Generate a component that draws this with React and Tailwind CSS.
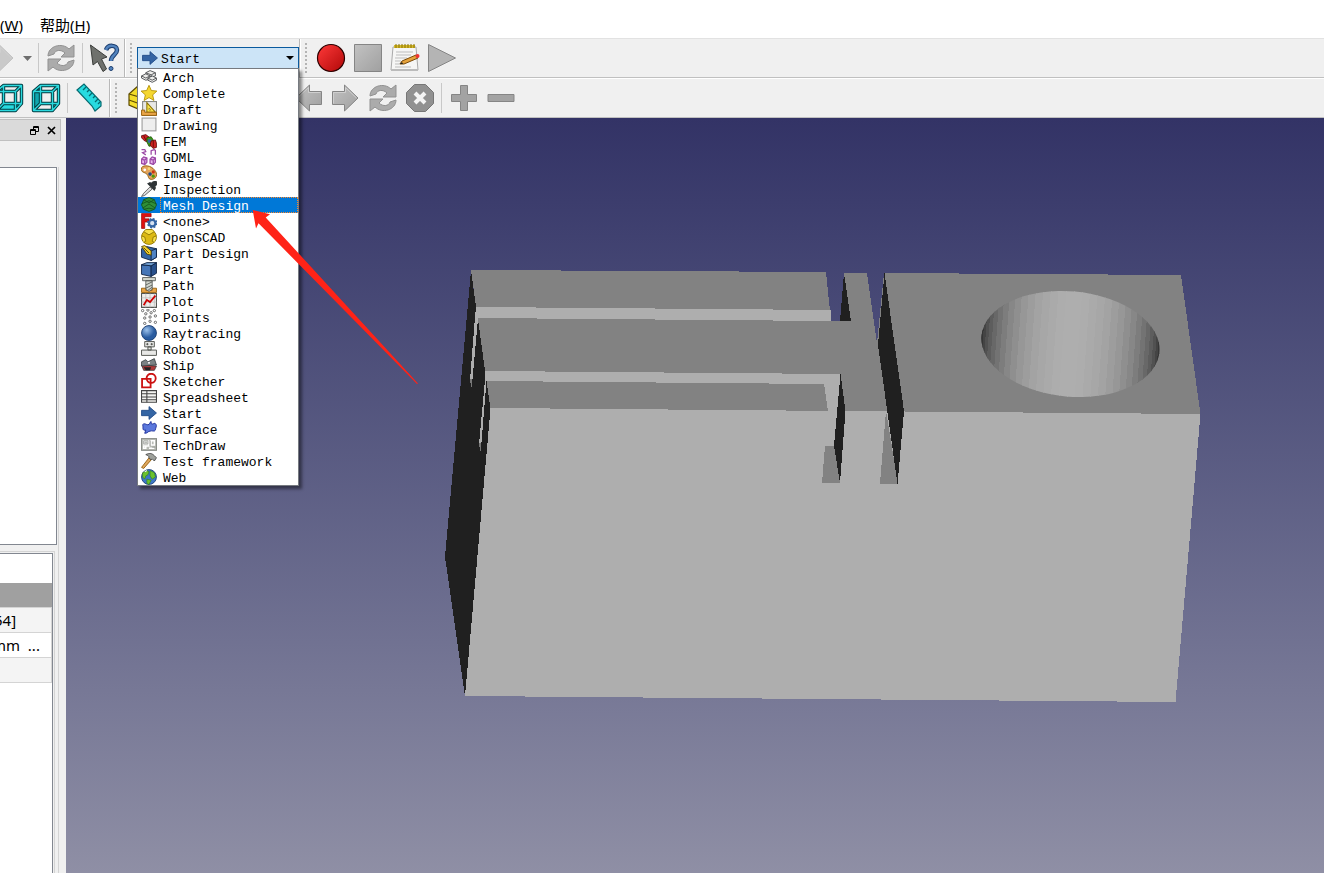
import React, { useState } from 'react';

const GREY = '#b4b4b4';
const GREY_LINE = '#858585';

/* ---------- workbench icons (16x16) ---------- */

const StartIcon = () => (
  <path d="M1 5.500h7V2l7 6-7 6v-3.500H1z" fill="#3465a4" stroke="#204a87" strokeWidth="0.8" />
);

const ICONS = {
  Arch: (
    <g fill="#eeeeec" stroke="#55575a" strokeWidth="0.9">
      <path d="M5 4l4-2 5 2v3l-4 1-5-2z" />
      <path d="M1 7l4-2 4 2v3l-4 1-4-2z" />
      <path d="M7 9l4-2 4 2v2l-4 2-4-2z" />
      <path d="M5 4l5 2 4-2M10 6v2M1 7l4 2 4-2M7 9l4 2 4-2" fill="none" />
    </g>
  ),
  Complete: (
    <path d="M8 .8l2.200 4.900 5.200.5-4 3.600 1.200 5.200L8 12.300 3.400 15l1.200-5.200-4-3.600 5.200-.5z" fill="#f5d730" stroke="#b08d00" strokeWidth="0.8" />
  ),
  Draft: (
    <g>
      <rect x="2" y="1" width="13" height="13" fill="#e8e8e6" stroke="#888a85" />
      <path d="M6 2v9h8z" fill="#fce94f" stroke="#8a7000" />
      <path d="M8 7v2h2z" fill="#fff" stroke="#8a7000" strokeWidth="0.6" />
      <path d="M1 9h3v2h11v3H1z" fill="#e9a548" stroke="#8f5902" strokeWidth="0.8" />
    </g>
  ),
  Drawing: <rect x="1.500" y="1.500" width="13" height="12" fill="#eeeeee" stroke="#999" />,
  FEM: (
    <g strokeWidth="0.7">
      <path d="M1 3l4-1 4 3-1 4-4-1-3-3z" fill="#cc2222" stroke="#560000" />
      <path d="M6 5l4-1 2 3v5l-4 1-2-4z" fill="#3c9a16" stroke="#174a04" />
      <circle cx="8.500" cy="8" r="1.800" fill="#3465a4" />
      <path d="M10 8l4-1 1 3v4l-3 1-3-3z" fill="#cc2222" stroke="#560000" />
      <path d="M3 3l2 4M12 8v6" stroke="#560000" />
    </g>
  ),
  GDML: (
    <g fill="#e9b6ee" stroke="#9c4aa6" strokeWidth="1.200">
      <path d="M1 1h3l1 2-3 1 3 2M10 6V2l3-1 1 1v4" fill="none" />
      <path d="M1 10l2-2 3 1v4l-2 2-3-1zM9 10l2-2 3 1v4l-2 2-3-1z" />
      <path d="M1 10l3 1 2-2M4 11v4M9 10l3 1 2-2M12 11v4" fill="none" />
    </g>
  ),
  Image: (
    <g>
      <path d="M1 3c2-3 9-2 12 2 4 4 2 9-3 9-3 0-2-3-4-5S0 8 1 3z" fill="#e3a45c" stroke="#8f5902" strokeWidth="0.8" />
      <circle cx="4" cy="5" r="1.300" fill="#fff" />
      <circle cx="8" cy="4" r="1.300" fill="#f7d774" />
      <circle cx="9" cy="9" r="1.700" fill="#204a87" />
      <circle cx="12" cy="7" r="1.500" fill="#cc3311" />
      <circle cx="12" cy="11" r="1.500" fill="#4e9a06" />
    </g>
  ),
  Inspection: (
    <g>
      <path d="M9 6L3 12l-2 3 3-1 7-6z" fill="#ddd" stroke="#555" strokeWidth="0.8" />
      <path d="M7 3l6 6 1-2-1-1c3-2 3-6 0-5-2 0-2 1-3 2L9 2z" fill="#2e3436" stroke="#2e3436" />
    </g>
  ),
  'Mesh Design': (
    <g>
      <path d="M3 3l5-2 5 2 2 5-2 4-5 2-5-2-2-4z" fill="#2f8f38" stroke="#14551c" strokeWidth="0.8" />
      <path d="M1 7l7-3 7 3M2 11l6-4 6 4M3 3l5 3 5-3M3 12l5-1 5 1" fill="none" stroke="#14551c" strokeWidth="0.8" />
    </g>
  ),
  '<none>': (
    <g>
      <path d="M1 1h9v3H4v2h4v3H4v6H1z" fill="#e01010" stroke="#8a0000" strokeWidth="0.6" />
      <circle cx="11" cy="10" r="3" fill="#d6e2f2" stroke="#3465a4" strokeWidth="2" />
      <circle cx="11" cy="10" r="4.200" fill="none" stroke="#3465a4" strokeWidth="1.500" strokeDasharray="1.800 1.500" />
    </g>
  ),
  OpenSCAD: (
    <g>
      <circle cx="8" cy="8" r="7" fill="#dcb914" stroke="#8c7200" strokeWidth="0.8" />
      <path d="M3 3l5 3 5-3-2-2H5zM1 7l3 1 1 4-2 1M15 7l-3 1-1 4 2 1" fill="#f7e04a" stroke="#8c7200" strokeWidth="0.8" />
    </g>
  ),
  'Part Design': (
    <g strokeWidth="0.8">
      <path d="M1 4l5-2 9 2v8l-5 3-9-3z" fill="#3465a4" stroke="#0b1f3f" />
      <path d="M10 6l5-2v8l-5 3z" fill="#4f83c4" stroke="#0b1f3f" />
      <path d="M1 2l3-1 6 5v4L6 9z" fill="#f2cf2c" stroke="#4d3d00" />
      <path d="M3 3l5 5" stroke="#4d3d00" />
    </g>
  ),
  Part: (
    <g stroke="#0b1f3f" strokeWidth="0.8">
      <path d="M1 4l9 1v10l-9-2z" fill="#4576b8" />
      <path d="M10 5l5-3v10l-5 3z" fill="#28508c" />
      <path d="M1 4l5-2 9 0-5 3z" fill="#729fcf" />
    </g>
  ),
  Path: (
    <g strokeWidth="0.8">
      <path d="M1 11h4v2h6v-2h4v4H1z" fill="#e9a548" stroke="#8f5902" />
      <path d="M2 1h12v3H2zM5 4h6v8l-3 2-3-2z" fill="#d3d7cf" stroke="#555753" />
      <path d="M5 8l6-3M5 11l6-3M7 13l4-3" stroke="#555753" />
    </g>
  ),
  Plot: (
    <g>
      <path d="M1 1h14v13H1z" fill="#eeeeec" stroke="#555753" />
      <path d="M5 1v13M9 1v13M13 1v13M1 5h14M1 9h14" stroke="#bbb" strokeWidth="0.7" />
      <path d="M3 12l3-5 3 2 5-6" fill="none" stroke="#cc0000" strokeWidth="1.600" />
    </g>
  ),
  Points: (
    <g fill="#fff" stroke="#666" strokeWidth="0.9">
      {[[2, 2], [7, 1.5], [13, 2], [5, 5], [10, 4], [14, 7], [4, 9], [9, 8], [4, 14], [9, 12], [14, 13]].map(([x, y]) => (
        <circle key={`${x}-${y}`} cx={x} cy={y} r="1.100" />
      ))}
    </g>
  ),
  Raytracing: <circle cx="8" cy="8" r="7" fill="url(#ball)" stroke="#173a6d" strokeWidth="0.8" />,
  Robot: (
    <g fill="#e8e8e6" stroke="#555753" strokeWidth="0.9">
      <path d="M4 1h9v5H4zM7 6h3v3H7zM1 9h14v5H1z" />
      <path d="M6 3h1v1H6zM10 3h1v1h-1z" fill="#222" />
    </g>
  ),
  Ship: (
    <g strokeWidth="0.7">
      <path d="M1 8l14 1-2 4H3z" fill="#b03a3a" stroke="#333" />
      <path d="M1 5l4-2 2 2 6-3 2 6-14 1z" fill="#7b8284" stroke="#2e3436" />
      <path d="M3 10h7l-1 3H5z" fill="#222" />
      <circle cx="8" cy="6" r="1" fill="#eee" />
    </g>
  ),
  Sketcher: (
    <g fill="none" stroke="#cc1111" strokeWidth="1.700">
      <path d="M1.500 6h8v8h-8z" />
      <circle cx="10" cy="5.500" r="4.300" />
    </g>
  ),
  Spreadsheet: (
    <g>
      <path d="M1 2h14v11H1z" fill="#f4f4f2" stroke="#444" />
      <path d="M1 5h14M1 8h14M1 10.500h14M6 2v11" stroke="#444" />
    </g>
  ),
  Start: <StartIcon />,
  Surface: (
    <path d="M2 4c2-2 3 0 5 0s1-2 3-3v2c2 1 3-1 4 0 2 2 0 4 0 6-1 2-3 0-5 1-2 0-2 2-5 2l1-3C1 10 3 6 2 4z" fill="#5b78dc" stroke="#1d2f9c" strokeWidth="0.9" />
  ),
  TechDraw: (
    <g fill="none" stroke="#8a8d88">
      <rect x="1" y="2" width="14" height="11" fill="#b9bcb6" />
      <path d="M3 4h4v3H3zM3 9h2v2H3zM8 4v5H5M10 4h3v4h-3zM8 11h5" stroke="#fff" strokeWidth="1.400" />
      <path d="M3 4h4v3H3zM9 4v5M11 10h3" strokeWidth="0.7" />
    </g>
  ),
  'Test framework': (
    <g strokeWidth="0.8">
      <path d="M8 5l2 2-7 8-2-1z" fill="#e0a860" stroke="#8f5902" />
      <path d="M5 2c4-2 6-1 8 1l2 2-2 3-2-2-1 1-2-2c0-2-1-2-3-3z" fill="#9da09b" stroke="#444" />
    </g>
  ),
  Web: (
    <g>
      <circle cx="8" cy="8" r="7" fill="#3c78c8" stroke="#1b3f77" strokeWidth="0.8" />
      <path d="M2 4l4-2 2 1-1 3-2 1-1 3-2-2zM9 2l4 2 1 4-3 2-2-3zM6 10l4 1-2 4-2-1z" fill="#6cc22e" stroke="#327a0a" strokeWidth="0.5" />
      <path d="M4 3l2-1" stroke="#fff" />
    </g>
  ),
};

const WORKBENCHES = Object.keys(ICONS);

function WorkbenchIcon({ name }) {
  return (
    <svg className="h-4 w-4 shrink-0" viewBox="0.5 0.5 15 15" aria-hidden="true">
      {ICONS[name]}
    </svg>
  );
}

/* ---------- toolbar icons (32x32) ---------- */

const ForwardIcon = ({ fill = 'url(#metal)', stroke = GREY_LINE }) => (
  <g>
    <path d="M2.500 9.500h12V3L28 16 14.500 29v-6.500h-12z" fill={fill} stroke={stroke} />
    <path d="M3.500 21.500v-11h12V5.500L26.500 16" fill="none" stroke="#cfcfcf" />
  </g>
);
const BackIcon = () => (
  <g>
    <path d="M28.500 9.500h-12V3L3 16l13.500 13v-6.500h12z" fill="url(#metal)" stroke={GREY_LINE} />
    <path d="M27.500 10.500h-12V5.500L4.500 16" fill="none" stroke="#cfcfcf" />
  </g>
);
const RefreshIcon = () => (
  <g fill="#ababab" stroke="#919191">
    <path d="M3 14C3 4 17 0 24 7l5-4v12H16l4-4c-4-4-10-3-11 1z" />
    <path d="M29 18c0 10-14 14-21 7l-5 4V17h13l-4 4c4 4 10 3 11-1z" />
  </g>
);
const WhatsThisIcon = () => (
  <g>
    <path d="M1.500 3l16.500 12-5.500 2 5 10-3.500 2.500-5.500-10L4 23z" fill="#6f716d" stroke="#3b3d3a" />
    <path d="M17 8c2-6 11-5 11 0 0 5-6 5-6 11" fill="none" stroke="#1c3d6e" strokeWidth="4.500" />
    <path d="M17 8c2-6 11-5 11 0 0 5-6 5-6 11" fill="none" stroke="#5384be" strokeWidth="2.500" />
    <circle cx="22" cy="26.500" r="2" fill="#5384be" stroke="#1c3d6e" />
  </g>
);
const CUBE_EDGES = 'M3.500 9.500h19v19h-19zM10.500 3.500h18v18h-18zM3.500 9.500l7-6M22.500 9.500l6-6M3.500 28.500l7-7M22.500 28.500l6-7';
const CubeIcon = ({ filled }) => (
  <g strokeLinejoin="round">
    {filled === 'bottom' && <path d="M3 28l8-8h18l-7 8z" fill="#27dbe0" />}
    {filled === 'back' && <path d="M3 10l8-6v17l-8 8z" fill="#11a6ae" />}
    <path d={CUBE_EDGES} fill="none" stroke="#033b40" strokeWidth="3.400" />
    <path d={CUBE_EDGES} fill="none" stroke="#2bd9de" strokeWidth="1.400" />
  </g>
);
const RulerIcon = () => (
  <g stroke="#056a70">
    <path d="M3 8l7-6 17 18v4l-6 5-3-5z" fill="#27dbe0" strokeWidth="1.200" />
    <path d="M12 5l-3 3M15 8l-2 2M18 11l-3 3M21 14l-2 2M24 17l-3 3M26 20l-2 2" strokeWidth="1.300" />
  </g>
);
const BrickIcon = () => (
  <g fill="#f3dc29" stroke="#5c4a00" strokeWidth="1.200">
    <path d="M4 12l9-8 14 4v16l-9 5-14-6z" />
    <path d="M4 12l14 4 9-8M18 16v13M4 18l14 5" />
  </g>
);
const RecordIcon = () => <circle cx="16" cy="16" r="13.500" fill="url(#record)" stroke="#2c0000" strokeWidth="1.200" />;
const StopIcon = () => <path d="M2.500 2.500h27v27h-27z" fill="url(#metal)" stroke={GREY_LINE} />;
const MacrosIcon = () => (
  <g>
    <path d="M4 5h23l2 23H2z" fill="#f6f6f5" stroke="#aaa" />
    <path d="M2 27h27v2H2z" fill="#bbb" />
    <path d="M5 3h21v3H5z" fill="#d4b82c" />
    <path d="M7 2v4M10 2v4M13 2v4M16 2v4M19 2v4M22 2v4M25 2v4" stroke="#8a7200" />
    <path d="M7 10h17M7 13h15M6 16h12M6 19h6M6 22h5M6 25h16" stroke="#bdbdbd" />
    <path d="M13 19l14-6 2 3-14 6-4 0z" fill="#e5a23a" stroke="#7a4a08" />
    <circle cx="28.500" cy="14" r="2" fill="#e33" />
    <path d="M11 22l2-2 1 2z" fill="#222" />
  </g>
);
const PlayIcon = () => <path d="M2.500 2.500L29.500 16l-27 13.500z" fill={GREY} stroke={GREY_LINE} />;
const AbortIcon = () => (
  <g>
    <path d="M10.500 2.500h11l8 8v11l-8 8h-11l-8-8v-11z" fill="#919191" stroke="#777" />
    <path d="M11 11l10 10M21 11L11 21" stroke="#f4f4f4" strokeWidth="4" />
  </g>
);
const PlusIcon = () => <path d="M12.500 3.500h7v9h9v7h-9v9h-7v-9h-9v-7h9z" fill="#a3a3a3" stroke={GREY_LINE} />;
const MinusIcon = () => <path d="M3 12.500h26v7H3z" fill="#a3a3a3" stroke={GREY_LINE} />;

function ToolButton({ label, children }) {
  return (
    <button type="button" aria-label={label} className="flex h-9 w-[37px] shrink-0 items-center justify-center">
      <svg className="h-8 w-8" viewBox="0 0 32 32" aria-hidden="true">{children}</svg>
    </button>
  );
}

function Separator() {
  return (
    <div className="flex w-[7px] shrink-0 justify-center">
      <div className="h-[30px] w-px bg-[#c8c8c8]" />
    </div>
  );
}

function Handle() {
  return <div className="mx-1 h-[30px] w-[3px] shrink-0 border-l-2 border-dotted border-[#b4b4b4]" />;
}

function ToolGroupEnd() {
  return <div className="h-full w-[2px] shrink-0 border-r border-white bg-[#b8b8b8]" />;
}

function WorkbenchSelector() {
  const [current, setCurrent] = useState('Start');

  return (
    <div className="relative z-10 h-[22px] w-[162px] shrink-0 font-['Liberation_Mono','Noto_Sans_CJK_SC',monospace] text-[13px] leading-4 text-black">
      <select
        aria-label="Workbench"
        value={current}
        onChange={(e) => setCurrent(e.target.value)}
        className="h-full w-full appearance-none border border-[#0a5a9e] bg-[#cce4f7] pt-[3px] pl-[23px]"
      >
        {WORKBENCHES.map((name) => (
          <option key={name}>{name}</option>
        ))}
      </select>
      <div className="pointer-events-none absolute inset-0 flex items-center justify-between px-[5px]">
        <WorkbenchIcon name={current} />
        <svg className="h-1 w-2" viewBox="0 0 8 4"><path d="M0 0h8L4 4z" /></svg>
      </div>

      <ul className="absolute top-[21px] left-0 w-full border border-[#767a80] bg-white shadow-[3px_3px_3px_rgba(0,0,0,0.45)]">
        {WORKBENCHES.map((name) => (
          <li key={name}>
            <button
              type="button"
              onClick={() => setCurrent(name)}
              className={`flex h-4 w-full items-center pl-[3px] text-left ${name === 'Mesh Design' ? 'bg-[#0078d7] text-white' : ''}`}
            >
              <WorkbenchIcon name={name} />
              <span
                className={`ml-[3px] h-4 flex-1 border border-dotted pl-[2px] leading-[18px] whitespace-nowrap ${
                  name === 'Mesh Design' ? 'border-[#ff8728]' : 'border-transparent'
                }`}
              >
                {name}
              </span>
            </button>
          </li>
        ))}
      </ul>

      {/* pointer to the mesh workbench */}
      <svg className="pointer-events-none absolute top-[161px] left-[113px] h-[180px] w-[172px]" viewBox="250 208 172 180">
        <path d="M252.700 210L270 214.300 265.700 217.500 418 383.500 417 384 258.500 223.300 256 228.500z" fill="#ff2317" />
      </svg>
    </div>
  );
}

/* ---------- 3D view ---------- */

// inner wall of the bore, one strip per facet
const FACETS = Array.from({ length: 36 }, (_, i) => {
  const mid = (Math.PI * (i + 0.5)) / 36;
  const shade = Math.round(18 + 156 * Math.pow(Math.sin(mid), 0.95));
  return {
    x1: 1070.5 - 91 * Math.cos((Math.PI * i) / 36),
    x2: 1070.5 - 91 * Math.cos((Math.PI * (i + 1)) / 36),
    fill: `rgb(${shade},${shade},${shade})`,
  };
});

function ModelView() {
  return (
    <main className="min-w-0 flex-1 overflow-hidden bg-linear-to-b from-[#333366] to-[#8f8fa5]">
      <svg className="h-full w-full" viewBox="66 118 1258 755" preserveAspectRatio="xMidYMid slice" shapeRendering="crispEdges">
        <defs>
          <clipPath id="bore">
            <ellipse cx="1070.500" cy="344" rx="89.300" ry="52.600" transform="rotate(5.300 1070.500 344)" />
          </clipPath>
        </defs>
        <path d="M471 270L826 272 831 321H840L844 273H867L877 343 884 273 1181 275 1200.500 414 490 409z" fill="#828282" />
        <path d="M490 408L1200.500 414 1175.500 702 465 696z" fill="#aeaeae" />
        <path d="M471 270L445 557 465 696 490.500 409 487 384 485 371 478 319 476 307z" fill="#202020" />

        {/* slots */}
        <path d="M476 307L831 310V321L478 318 472 385 470 380 475 317z" fill="#aeaeae" />
        <path d="M485 371L840.500 374 834 446 828 411 824 384 486.500 381 481 448 479 444 485 380z" fill="#aeaeae" />
        <path d="M828 411L824 384H839L835 446H829z" fill="#aeaeae" />
        <path d="M470 379H472V387H471zM479 443H481V451H480z" fill="#777" />
        <path d="M825 446H834L840 483H822z" fill="#828282" />
        <path d="M840.500 374L845.500 411 840 483 834 446z" fill="#202020" />
        <path d="M844 273L851 321H840z" fill="#202020" />
        <path d="M886 411L898 484 880 483.500z" fill="#828282" />
        <path d="M884.500 273L904 411 897.500 484 878 345z" fill="#202020" />

        <g clipPath="url(#bore)">
          {FACETS.map((f) => (
            <path key={f.x1} d={`M${f.x1 + 4} 288H${f.x2 + 5}L${f.x2 - 3} 400H${f.x1 - 4}z`} fill={f.fill} />
          ))}
        </g>
      </svg>
    </main>
  );
}

function SideDock() {
  return (
    <aside className="flex w-[66px] shrink-0 flex-col bg-[#f0f0f0] text-[15px] text-black">
      <div className="mt-px mr-[5px] flex h-[22px] items-center justify-end gap-2 border border-l-0 border-[#c0c0c0] bg-[#dadada] pr-1">
        <button type="button" aria-label="Float">
          <svg className="h-[9px] w-[9px]" viewBox="0 0 9 9" fill="none" stroke="#000">
            <path d="M.5 3.500h5v5h-5zM.5 4.500h5M3.500 3.500v-3h5v5h-3M3.500 1.500h5" />
          </svg>
        </button>
        <button type="button" aria-label="Close">
          <svg className="h-[9px] w-[9px]" viewBox="0 0 9 9" stroke="#000" strokeWidth="1.700">
            <path d="M1 1l7 7M8 1L1 8" />
          </svg>
        </button>
      </div>

      <div className="mt-[26px] flex w-[59px] flex-1 flex-col border-r border-[#d4d4d4]">
        <div className="mr-px h-[378px] shrink-0 border border-l-0 border-[#828790] bg-white" />
        <div className="mt-[6px] mr-[3px] flex flex-1 flex-col border-t border-r border-[#d4d4d4] pt-px pr-px">
          <div className="flex-1 border-t border-r border-[#828790] bg-white">
            <table className="w-full border-collapse leading-5">
              <tbody>
                <tr className="h-[29px]"><td /></tr>
                <tr className="h-6 bg-[#a0a0a0]"><td /></tr>
                <tr className="h-[25px] border-y border-r border-[#d4d4d4] bg-[#f4f4f4]"><td><div className="-ml-[6px]">54]</div></td></tr>
                <tr className="h-[25px] border-y border-r border-[#d4d4d4]"><td><div className="-ml-2 whitespace-pre">mm  ...</div></td></tr>
                <tr className="h-[25px] border-y border-r border-[#d4d4d4] bg-[#f4f4f4]"><td /></tr>
              </tbody>
            </table>
          </div>
        </div>
      </div>
    </aside>
  );
}

function App() {
  return (
    <div className="flex min-h-screen flex-col overflow-hidden bg-[#f0f0f0] font-['Noto_Sans','Noto_Sans_CJK_SC',sans-serif]">
      <svg className="absolute h-0 w-0" aria-hidden="true">
        <defs>
          <radialGradient id="ball" cx="0.35" cy="0.3">
            <stop offset="0" stopColor="#9cc2ec" />
            <stop offset="1" stopColor="#2a5ca0" />
          </radialGradient>
          <linearGradient id="record" x1="0" y1="0" x2="1" y2="1">
            <stop offset="0" stopColor="#ff3a3a" />
            <stop offset="1" stopColor="#b00808" />
          </linearGradient>
          <linearGradient id="metal" x1="0" y1="0" x2="1" y2="1">
            <stop offset="0" stopColor="#c2c2c2" />
            <stop offset="1" stopColor="#a0a0a0" />
          </linearGradient>
        </defs>
      </svg>

      <nav className="flex h-[38px] gap-[17px] bg-white pt-[13px] text-[15px] leading-6 text-black">
        <button type="button" className="h-6">(<u>W</u>)</button>
        <button type="button" className="h-6">帮助(<u>H</u>)</button>
      </nav>

      <div className="flex h-10 items-center border-y border-t-[#e2e2e2] border-b-[#c0c0c0]">
        <div className="-ml-[18px] flex shrink-0 items-center">
          <ToolButton label="Redo"><ForwardIcon fill="#c9c9c9" stroke="#c0c0c0" /></ToolButton>
          <button type="button" aria-label="Redo history" className="flex w-4 justify-center">
            <svg className="h-[5px] w-[9px]" viewBox="0 0 9 5"><path d="M0 0h9L4.500 5z" fill="#6e6e6e" /></svg>
          </button>
          <Separator />
          <ToolButton label="Refresh"><RefreshIcon /></ToolButton>
          <Separator />
          <ToolButton label="What's this?"><WhatsThisIcon /></ToolButton>
        </div>
        <div className="w-px" />
        <ToolGroupEnd />
        <Handle />
        <WorkbenchSelector />
        <ToolGroupEnd />
        <Handle />
        <ToolButton label="Record macro"><RecordIcon /></ToolButton>
        <ToolButton label="Stop macro recording"><StopIcon /></ToolButton>
        <ToolButton label="Macros"><MacrosIcon /></ToolButton>
        <ToolButton label="Execute macro"><PlayIcon /></ToolButton>
      </div>

      <div className="flex h-10 items-center border-y border-t-white border-b-[#c0c0c0]">
        <div className="-ml-[10px] flex shrink-0 items-center">
          <ToolButton label="Bottom view"><CubeIcon filled="bottom" /></ToolButton>
          <ToolButton label="Left view"><CubeIcon filled="back" /></ToolButton>
          <Separator />
          <ToolButton label="Measure distance"><RulerIcon /></ToolButton>
        </div>
        <div className="w-px" />
        <ToolGroupEnd />
        <Handle />
        <ToolButton label="Create part"><BrickIcon /></ToolButton>
        <div className="w-[131px] shrink-0" />
        <ToolButton label="Previous page"><BackIcon /></ToolButton>
        <ToolButton label="Next page"><ForwardIcon /></ToolButton>
        <ToolButton label="Refresh page"><RefreshIcon /></ToolButton>
        <ToolButton label="Stop loading"><AbortIcon /></ToolButton>
        <Separator />
        <ToolButton label="Zoom in"><PlusIcon /></ToolButton>
        <ToolButton label="Zoom out"><MinusIcon /></ToolButton>
      </div>

      <div className="flex flex-1">
        <SideDock />
        <ModelView />
      </div>
    </div>
  );
}

export default App;
